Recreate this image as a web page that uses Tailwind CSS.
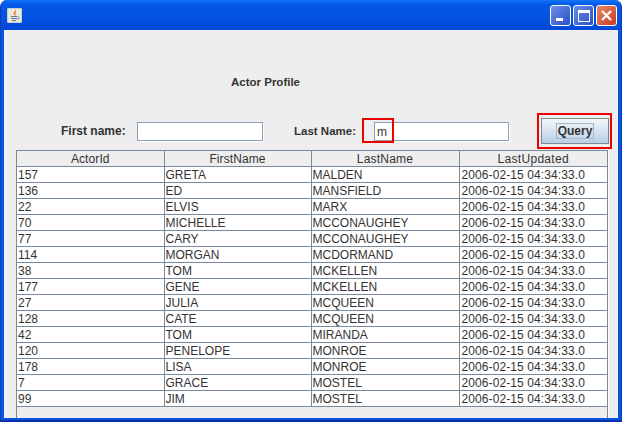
<!DOCTYPE html>
<html lang="en">
<head>
    <meta charset="UTF-8" />
    <title>Actor Profile</title>
    <script src="https://cdn.jsdelivr.net/npm/@tailwindcss/browser@4"></script>
</head>
<body class="bg-white">
    <div class="relative flex flex-col w-[622px] h-[422px] overflow-hidden rounded-t-[7px] bg-[#0855dd] border-x border-b-2 border-x-[#0a3cc0] border-b-[#0a2fa8] font-['Liberation_Sans',sans-serif] text-[12px] text-[#333]">
        <!-- title bar -->
        <div class="flex items-center justify-between h-[30px] pt-[1px] pl-[6px] pr-[4px] shrink-0 bg-gradient-to-b from-[#1474f5] via-[#0558e6] via-[15%] to-[#0349d8]">
            <div class="flex items-center justify-center w-[15px] h-[15px] bg-[#ece9d8] rounded-[1px] border border-[#c8ccd4]">
                <svg width="11" height="13" viewBox="0 0 11 13">
                    <path d="M6 0 C7 2 4 3 5 5 C5.500 6 6 6 6 7 C8 5 5 4 7 2 Z" fill="#e8651a" />
                    <path d="M2 7.500 H8 M2 9.500 H8 M3 11.500 H7" stroke="#5b7a9c" stroke-width="1" />
                    <path d="M8.500 7.500 C10.500 7.500 10.500 10 8 10.500" stroke="#5b7a9c" stroke-width="1" fill="none" />
                </svg>
            </div>
            <div class="flex gap-[2px]">
                <div class="flex items-end w-[21px] h-[21px] pl-[5px] pb-[4px] rounded-[3px] border border-white bg-gradient-to-br from-[#6d8ee8] to-[#2a4fc4]">
                    <div class="w-[7px] h-[3px] bg-white"></div>
                </div>
                <div class="flex items-center justify-center w-[21px] h-[21px] rounded-[3px] border border-white bg-gradient-to-br from-[#6d8ee8] to-[#2a4fc4]">
                    <div class="w-[12px] h-[12px] border border-white border-t-[3px]"></div>
                </div>
                <div class="flex items-center justify-center w-[21px] h-[21px] rounded-[3px] border border-white bg-gradient-to-br from-[#e8866a] to-[#c63a12]">
                    <svg width="13" height="13" viewBox="0 0 13 13">
                        <path d="M2 2 L11 11 M11 2 L2 11" stroke="#fff" stroke-width="2.200" />
                    </svg>
                </div>
            </div>
        </div>

        <!-- content pane -->
        <div class="flex flex-col flex-1 mx-[3px] mb-[2px] bg-[#eeeeee] min-h-0">
            <div class="h-[45px] pl-[227px] mt-[45px] font-bold text-[11.5px] leading-[14px]">Actor Profile</div>

            <div class="flex items-center h-[24px] -mt-[1px] font-bold">
                <span class="ml-[57px] w-[76px] text-[12px]">First name:</span>
                <div class="w-[126px] h-[19px] bg-white border border-[#8aa0b8] shadow-[1px_1px_0_#fff]"></div>
                <span class="ml-[31px] w-[80px] pt-[2px] text-[11.5px]">Last Name:</span>
                <div class="w-[135px] h-[19px] bg-white border border-[#8aa0b8] shadow-[1px_1px_0_#fff] pl-[2px] font-normal text-[12px] leading-[18px]">m</div>
                <button class="ml-[32px] w-[68px] h-[26px] border border-[#7a8a99] bg-gradient-to-b from-[#f4f7fa] to-[#b8cfe5] font-bold text-[12px]">
                    <span class="px-[1px] border border-[#a3b8cc]">Query</span>
                </button>
            </div>

            <!-- table -->
            <div class="flex-1 ml-[12px] mr-[10px] mt-[7px] border-x border-[#7a8a99] shadow-[1px_0_0_#fff] min-h-0">
                <table class="w-full table-fixed border-collapse text-center">
                    <colgroup>
                        <col class="w-[147px]" />
                        <col class="w-[147px]" />
                        <col class="w-[148px]" />
                        <col />
                    </colgroup>
                    <thead>
                        <tr class="h-[16px] bg-[#eeeeee] border-y border-[#7a8a99]">
                            <th class="pt-[2px] leading-[13px] tracking-[0.1px] font-normal border-r border-[#7a8a99]">ActorId</th>
                            <th class="pt-[2px] leading-[13px] tracking-[0.1px] font-normal border-r border-[#7a8a99]">FirstName</th>
                            <th class="pt-[2px] leading-[13px] tracking-[0.2px] font-normal border-r border-[#7a8a99]">LastName</th>
                            <th class="pt-[2px] leading-[13px] tracking-[0.3px] font-normal">LastUpdated</th>
                        </tr>
                    </thead>
                    <tbody class="bg-white text-left">
                        <tr class="h-[16px] border-b border-[#7a8a99]"><td class="pl-[1px] pt-[2px] leading-[13px] border-r border-[#7a8a99]">157</td><td class="pl-[1px] pt-[2px] leading-[13px] border-r border-[#7a8a99]">GRETA</td><td class="pl-[1px] pt-[2px] leading-[13px] border-r border-[#7a8a99]">MALDEN</td><td class="pl-[2px] pt-[2px] leading-[13px] tracking-[0.1px]">2006-02-15 04:34:33.0</td></tr>
                        <tr class="h-[16px] border-b border-[#7a8a99]"><td class="pl-[1px] pt-[2px] leading-[13px] border-r border-[#7a8a99]">136</td><td class="pl-[1px] pt-[2px] leading-[13px] border-r border-[#7a8a99]">ED</td><td class="pl-[1px] pt-[2px] leading-[13px] border-r border-[#7a8a99]">MANSFIELD</td><td class="pl-[2px] pt-[2px] leading-[13px] tracking-[0.1px]">2006-02-15 04:34:33.0</td></tr>
                        <tr class="h-[16px] border-b border-[#7a8a99]"><td class="pl-[1px] pt-[2px] leading-[13px] border-r border-[#7a8a99]">22</td><td class="pl-[1px] pt-[2px] leading-[13px] border-r border-[#7a8a99]">ELVIS</td><td class="pl-[1px] pt-[2px] leading-[13px] border-r border-[#7a8a99]">MARX</td><td class="pl-[2px] pt-[2px] leading-[13px] tracking-[0.1px]">2006-02-15 04:34:33.0</td></tr>
                        <tr class="h-[16px] border-b border-[#7a8a99]"><td class="pl-[1px] pt-[2px] leading-[13px] border-r border-[#7a8a99]">70</td><td class="pl-[1px] pt-[2px] leading-[13px] border-r border-[#7a8a99]">MICHELLE</td><td class="pl-[1px] pt-[2px] leading-[13px] border-r border-[#7a8a99]">MCCONAUGHEY</td><td class="pl-[2px] pt-[2px] leading-[13px] tracking-[0.1px]">2006-02-15 04:34:33.0</td></tr>
                        <tr class="h-[16px] border-b border-[#7a8a99]"><td class="pl-[1px] pt-[2px] leading-[13px] border-r border-[#7a8a99]">77</td><td class="pl-[1px] pt-[2px] leading-[13px] border-r border-[#7a8a99]">CARY</td><td class="pl-[1px] pt-[2px] leading-[13px] border-r border-[#7a8a99]">MCCONAUGHEY</td><td class="pl-[2px] pt-[2px] leading-[13px] tracking-[0.1px]">2006-02-15 04:34:33.0</td></tr>
                        <tr class="h-[16px] border-b border-[#7a8a99]"><td class="pl-[1px] pt-[2px] leading-[13px] border-r border-[#7a8a99]">114</td><td class="pl-[1px] pt-[2px] leading-[13px] border-r border-[#7a8a99]">MORGAN</td><td class="pl-[1px] pt-[2px] leading-[13px] border-r border-[#7a8a99]">MCDORMAND</td><td class="pl-[2px] pt-[2px] leading-[13px] tracking-[0.1px]">2006-02-15 04:34:33.0</td></tr>
                        <tr class="h-[16px] border-b border-[#7a8a99]"><td class="pl-[1px] pt-[2px] leading-[13px] border-r border-[#7a8a99]">38</td><td class="pl-[1px] pt-[2px] leading-[13px] border-r border-[#7a8a99]">TOM</td><td class="pl-[1px] pt-[2px] leading-[13px] border-r border-[#7a8a99]">MCKELLEN</td><td class="pl-[2px] pt-[2px] leading-[13px] tracking-[0.1px]">2006-02-15 04:34:33.0</td></tr>
                        <tr class="h-[16px] border-b border-[#7a8a99]"><td class="pl-[1px] pt-[2px] leading-[13px] border-r border-[#7a8a99]">177</td><td class="pl-[1px] pt-[2px] leading-[13px] border-r border-[#7a8a99]">GENE</td><td class="pl-[1px] pt-[2px] leading-[13px] border-r border-[#7a8a99]">MCKELLEN</td><td class="pl-[2px] pt-[2px] leading-[13px] tracking-[0.1px]">2006-02-15 04:34:33.0</td></tr>
                        <tr class="h-[16px] border-b border-[#7a8a99]"><td class="pl-[1px] pt-[2px] leading-[13px] border-r border-[#7a8a99]">27</td><td class="pl-[1px] pt-[2px] leading-[13px] border-r border-[#7a8a99]">JULIA</td><td class="pl-[1px] pt-[2px] leading-[13px] border-r border-[#7a8a99]">MCQUEEN</td><td class="pl-[2px] pt-[2px] leading-[13px] tracking-[0.1px]">2006-02-15 04:34:33.0</td></tr>
                        <tr class="h-[16px] border-b border-[#7a8a99]"><td class="pl-[1px] pt-[2px] leading-[13px] border-r border-[#7a8a99]">128</td><td class="pl-[1px] pt-[2px] leading-[13px] border-r border-[#7a8a99]">CATE</td><td class="pl-[1px] pt-[2px] leading-[13px] border-r border-[#7a8a99]">MCQUEEN</td><td class="pl-[2px] pt-[2px] leading-[13px] tracking-[0.1px]">2006-02-15 04:34:33.0</td></tr>
                        <tr class="h-[16px] border-b border-[#7a8a99]"><td class="pl-[1px] pt-[2px] leading-[13px] border-r border-[#7a8a99]">42</td><td class="pl-[1px] pt-[2px] leading-[13px] border-r border-[#7a8a99]">TOM</td><td class="pl-[1px] pt-[2px] leading-[13px] border-r border-[#7a8a99]">MIRANDA</td><td class="pl-[2px] pt-[2px] leading-[13px] tracking-[0.1px]">2006-02-15 04:34:33.0</td></tr>
                        <tr class="h-[16px] border-b border-[#7a8a99]"><td class="pl-[1px] pt-[2px] leading-[13px] border-r border-[#7a8a99]">120</td><td class="pl-[1px] pt-[2px] leading-[13px] border-r border-[#7a8a99]">PENELOPE</td><td class="pl-[1px] pt-[2px] leading-[13px] border-r border-[#7a8a99]">MONROE</td><td class="pl-[2px] pt-[2px] leading-[13px] tracking-[0.1px]">2006-02-15 04:34:33.0</td></tr>
                        <tr class="h-[16px] border-b border-[#7a8a99]"><td class="pl-[1px] pt-[2px] leading-[13px] border-r border-[#7a8a99]">178</td><td class="pl-[1px] pt-[2px] leading-[13px] border-r border-[#7a8a99]">LISA</td><td class="pl-[1px] pt-[2px] leading-[13px] border-r border-[#7a8a99]">MONROE</td><td class="pl-[2px] pt-[2px] leading-[13px] tracking-[0.1px]">2006-02-15 04:34:33.0</td></tr>
                        <tr class="h-[16px] border-b border-[#7a8a99]"><td class="pl-[1px] pt-[2px] leading-[13px] border-r border-[#7a8a99]">7</td><td class="pl-[1px] pt-[2px] leading-[13px] border-r border-[#7a8a99]">GRACE</td><td class="pl-[1px] pt-[2px] leading-[13px] border-r border-[#7a8a99]">MOSTEL</td><td class="pl-[2px] pt-[2px] leading-[13px] tracking-[0.1px]">2006-02-15 04:34:33.0</td></tr>
                        <tr class="h-[16px] border-b border-[#7a8a99]"><td class="pl-[1px] pt-[2px] leading-[13px] border-r border-[#7a8a99]">99</td><td class="pl-[1px] pt-[2px] leading-[13px] border-r border-[#7a8a99]">JIM</td><td class="pl-[1px] pt-[2px] leading-[13px] border-r border-[#7a8a99]">MOSTEL</td><td class="pl-[2px] pt-[2px] leading-[13px] tracking-[0.1px]">2006-02-15 04:34:33.0</td></tr>
                    </tbody>
                </table>
            </div>
        </div>

        <!-- red annotation boxes drawn over the shot -->
        <div class="absolute left-[361px] top-[118px] w-[32px] h-[25px] border-2 border-[#ee0000]"></div>
        <div class="absolute left-[536px] top-[113px] w-[75px] h-[36px] border-2 border-[#ee0000]"></div>
    </div>
</body>
</html>
